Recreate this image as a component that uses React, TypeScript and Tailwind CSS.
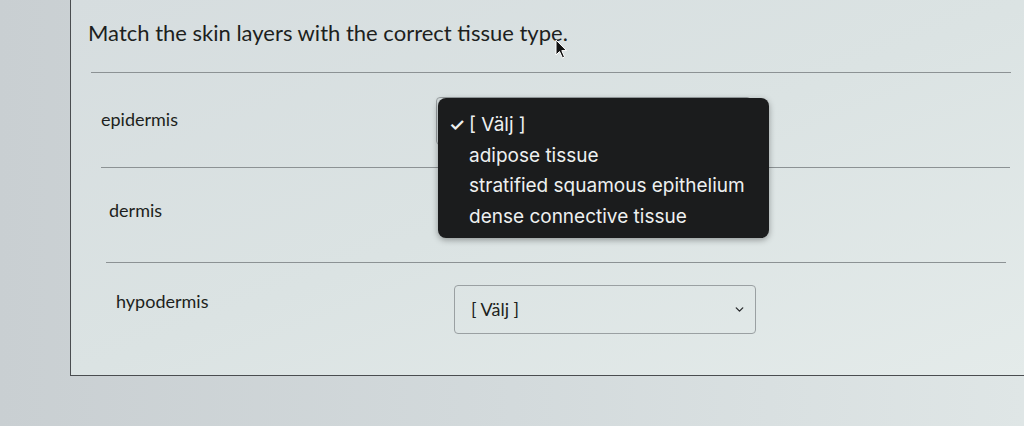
import { ChevronDown } from "lucide-react";

const font = { fontFamily: "Lato, 'Open Sans', sans-serif" };

// Native-looking select menu, opened over the first row
function OpenMenu() {
  const items = ["adipose tissue", "stratified squamous epithelium", "dense connective tissue"];
  return (
    <div className="absolute left-[438px] top-[98px] w-[331px] h-[140px] rounded-[8px] bg-[#1b1c1d] shadow-[0_2px_6px_rgba(0,0,0,0.35)] pt-[12px] text-[#eef0f0] text-[19px] leading-[30.5px] font-['Inter','Noto_Sans',sans-serif]">
      <div className="flex items-center pl-[11px]">
        <span className="w-[20px] text-[18px] font-semibold">✓</span>
        <span>[ Välj ]</span>
      </div>
      {items.map((t) => (
        <div key={t} className="pl-[31px]">
          {t}
        </div>
      ))}
    </div>
  );
}

export default function App() {
  return (
    <div
      className="relative w-[1024px] h-[426px] overflow-hidden bg-gradient-to-r from-[#c9cfd2] via-[#d3dadc] to-[#dfe6e6] text-[#1d1f20]"
      style={font}
    >
      <div className="ml-[70px] w-[960px] h-[376px] border-l-[1.5px] border-b-[1.5px] border-[#4a4d50] bg-gradient-to-br from-[#d6dddf] via-[#dbe3e3] to-[#e4ebea]">
        <h1 className="pl-[17px] pt-[18px] text-[22px] leading-[30px] font-normal">
          Match the skin layers with the correct tissue type.
        </h1>

        <div className="ml-[20px] mr-[19px] mt-[24px] border-t border-[#8c9294]" />

        <div className="flex h-[94px] pl-[30px]">
          <div className="w-[335px] pt-[33px] text-[18px]">epidermis</div>
          <div className="pt-[24px]">
            <div className="w-[315px] h-[48px] rounded-[4px] border border-[#9aa0a2]" />
          </div>
        </div>

        <div className="ml-[30px] mr-[20px] border-t border-[#8c9294]" />

        <div className="flex h-[94px] pl-[38px]">
          <div className="w-[335px] pt-[29px] text-[18px]">dermis</div>
        </div>

        <div className="ml-[35px] mr-[24px] border-t border-[#8c9294]" />

        <div className="flex pl-[45px]">
          <div className="w-[338px] pt-[25px] text-[18px]">hypodermis</div>
          <div className="pt-[22px]">
            <div className="flex items-center justify-between w-[302px] h-[49px] rounded-[4px] border border-[#9aa0a2] pl-[16px] pr-[9px] text-[18px]">
              <span>[ Välj ]</span>
              <ChevronDown size={13} strokeWidth={2.5} className="text-[#2a2c2e]" />
            </div>
          </div>
        </div>
      </div>

      <OpenMenu />

      {/* mouse pointer */}
      <svg className="absolute left-[555px] top-[39px]" width="14" height="22" viewBox="0 0 14 22">
        <path d="M1 1 L1 16 L4.5 12.5 L7.5 19 L9.5 18 L6.8 11.6 L11.5 11.6 Z" fill="#111" stroke="#fff" strokeWidth="1" />
      </svg>
    </div>
  );
}
